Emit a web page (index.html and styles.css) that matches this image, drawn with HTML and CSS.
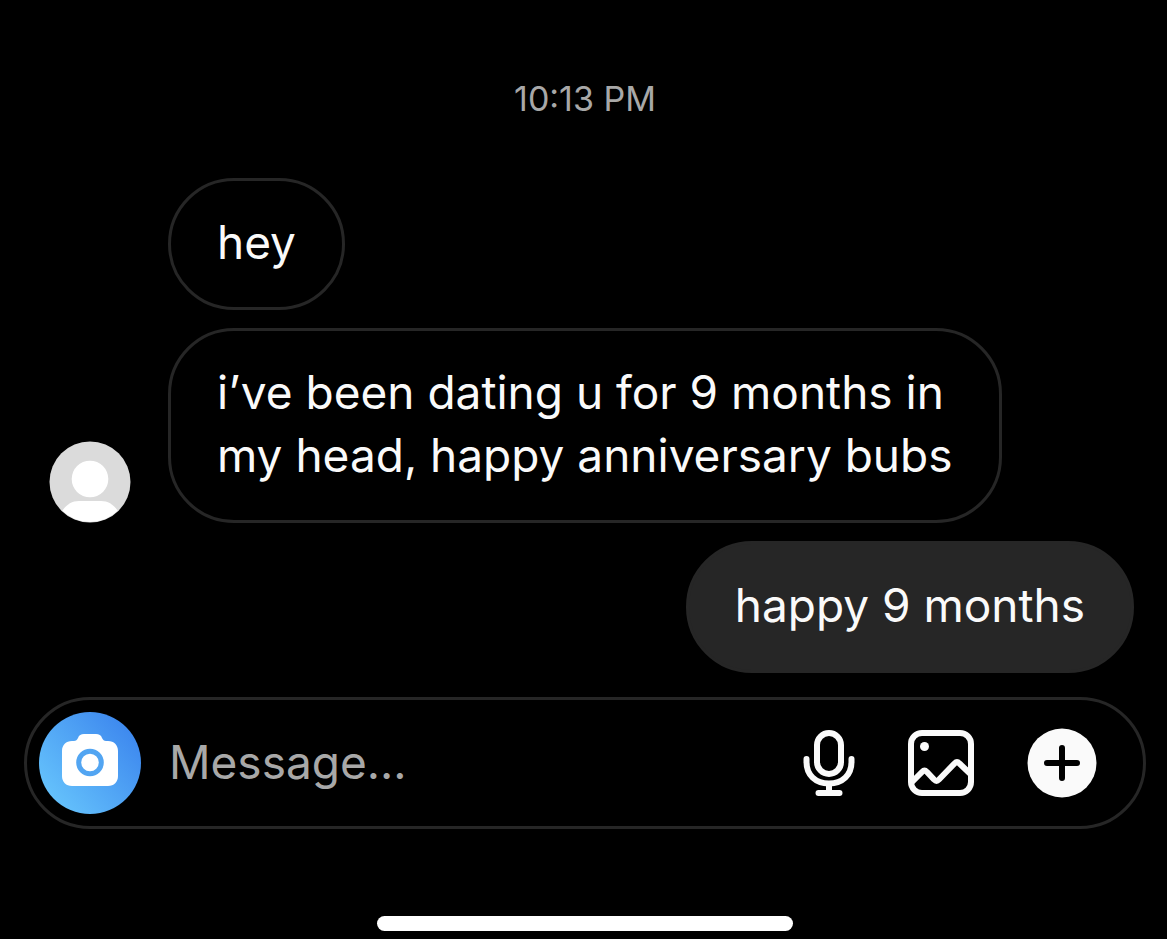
FILE: index.html
```
<!DOCTYPE html>
<html lang="en">
<head>
  <meta charset="UTF-8">
  <meta name="viewport" content="width=device-width, initial-scale=1.0">
  <title>Messages</title>
  <link rel="stylesheet" href="styles.css">
</head>
<body>

  <main class="chat">
    <time class="timestamp" datetime="22:13">10:13 PM</time>

    <div class="thread">
      <div class="received">
        <svg class="avatar" viewBox="0 0 82 82" role="img" aria-label="Profile picture">
          <defs>
            <clipPath id="avatar-clip"><circle cx="41" cy="41" r="40"/></clipPath>
          </defs>
          <circle cx="41" cy="41" r="40.5" fill="#dbdbdb"/>
          <g fill="#fff" clip-path="url(#avatar-clip)">
            <circle cx="41" cy="38" r="18.3"/>
            <path d="M10 76c4-10 11-16 20-16h22c9 0 16 6 20 16v6H10z"/>
          </g>
        </svg>
        <div class="bubbles">
          <p class="bubble">hey</p>
          <p class="bubble">i’ve been dating u for 9 months in my head, happy anniversary bubs</p>
        </div>
      </div>

      <p class="bubble bubble-own">happy 9 months</p>
    </div>

    <form class="composer">
      <button class="camera" type="button" aria-label="Camera">
        <svg viewBox="0 0 102 102" width="102" height="102">
          <path fill="#fff" d="M33 29h2c2 0 3-1 4-3 1-3 3-4 6-4h12c3 0 5 1 6 4 1 2 2 3 4 3h2c6 0 10 4 10 10v25c0 6-4 10-10 10H33c-6 0-10-4-10-10V39c0-6 4-10 10-10z"/>
          <circle cx="51" cy="50.5" r="11.3" fill="#fff" stroke="#52a5f2" stroke-width="5"/>
        </svg>
      </button>

      <input class="message" type="text" placeholder="Message..." aria-label="Message">

      <div class="actions">
        <button type="button" aria-label="Voice message">
          <svg width="52" height="70" viewBox="0 0 52 70" fill="none" stroke="#fafafa" stroke-width="6" stroke-linecap="round">
            <rect x="14" y="5" width="24" height="41" rx="12"/>
            <path d="M3.5 31v3c0 13 9 21.5 22.5 21.5S48.5 47 48.5 34v-3M26 56v8M15.5 65h21"/>
          </svg>
        </button>
        <button type="button" aria-label="Photo">
          <svg width="66" height="70" viewBox="0 0 66 70" fill="none" stroke="#fafafa" stroke-width="6" stroke-linejoin="round">
            <rect x="3" y="5" width="60" height="60" rx="11"/>
            <circle cx="16.5" cy="18.5" r="4.5" fill="#fafafa" stroke="none"/>
            <path d="M4 54l10-10q2.5-2.5 5 0l7 7.5q2.5 2.5 5 0l15.5-16q2.5-2.5 5 0L63 46.5"/>
          </svg>
        </button>
        <button type="button" aria-label="More">
          <svg width="70" height="70" viewBox="0 0 70 70">
            <circle cx="35" cy="35" r="34.5" fill="#fafafa"/>
            <path d="M35 20v30M20 35h30" stroke="#000" stroke-width="6" stroke-linecap="round"/>
          </svg>
        </button>
      </div>
    </form>

    <div class="home-bar"></div>
  </main>

</body>
</html>
```
FILE: styles.css
```
* {
  box-sizing: border-box;
}

body {
  margin: 0;
  background-color: #000;
  color: #fafafa;
  font-family: Inter, sans-serif;
}

.chat {
  display: flex;
  flex-direction: column;
  min-height: 100vh;
  padding: 78px 21px 8px 24px;
}

.timestamp {
  align-self: center;
  color: #a8a8a8;
  font-size: 34px;
  line-height: 42px;
}

.thread {
  display: flex;
  flex-direction: column;
  gap: 18px;
  margin-top: 58px;
  padding: 0 12px 0 25px;
}

.received {
  display: flex;
  align-items: flex-end;
  gap: 37px;
}

.avatar {
  flex: none;
  width: 82px;
  height: 82px;
}

.bubbles {
  display: flex;
  flex-direction: column;
  align-items: flex-start;
  gap: 18px;
}

.bubble {
  max-width: 834px;
  margin: 0;
  padding: 30px 46px 33px;
  border: 3px solid #262626;
  border-radius: 66px;
  font-size: 46px;
  line-height: 63px;
}

.bubble-own {
  align-self: flex-end;
  background-color: #262626;
}

.composer {
  display: flex;
  align-items: center;
  margin-top: 24px;
  padding: 12px 46px 12px 12px;
  border: 3px solid #262626;
  border-radius: 66px;
}

.composer button {
  display: block;
  flex: none;
  padding: 0;
  border: 0;
  background: none;
}

.composer svg {
  display: block;
}

.composer .camera {
  border-radius: 50%;
  background: linear-gradient(50deg, #66c4fc 10%, #3c86ee 90%);
}

.message {
  flex: 1;
  min-width: 0;
  margin-left: 28px;
  padding: 0 0 1px;
  border: 0;
  outline: 0;
  background: none;
  color: #fafafa;
  font-family: inherit;
  font-size: 46px;
  line-height: 63px;
}

.message::placeholder {
  color: #a8a8a8;
}

.actions {
  display: flex;
  gap: 53px;
}

.home-bar {
  align-self: center;
  width: 37%;
  height: 15px;
  margin-top: auto;
  border-radius: 8px;
  background-color: #fff;
}
```
